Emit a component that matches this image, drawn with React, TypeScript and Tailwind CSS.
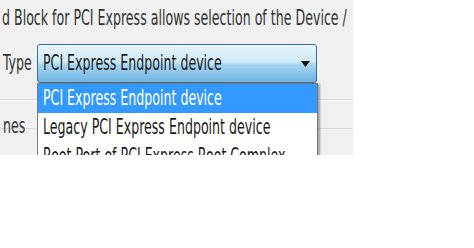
import React from 'react';

const FONT = "font-['DejaVu_Sans_Condensed','DejaVu_Sans',sans-serif]";

// texte étiré comme sur la capture (police haute, largeur serrée)
function T({ children, className = '' }: { children: React.ReactNode; className?: string }) {
  return (
    <span className={`inline-block origin-left scale-x-[0.667] whitespace-nowrap ${className}`}>{children}</span>
  );
}

export default function App() {
  return (
    <div className={`w-[474px] h-[248px] bg-white overflow-hidden ${FONT}`}>
      <div className="relative w-[353px] h-[155px] bg-[#f0f0f0] overflow-hidden text-[21px] leading-none">
        {/* description */}
        <div className="h-[44px] pl-[2px] pt-[8px] text-[#333]">
          <T>d Block for PCI Express allows selection of the Device /</T>
        </div>

        {/* ligne Type + combobox */}
        <div className="flex items-center h-[39px]">
          <div className="w-[37px] pl-[3px] text-[#333]">
            <T>Type</T>
          </div>
          <div className="flex items-center w-[280px] h-[39px] rounded-[3px] border border-[#3c6e92] bg-[linear-gradient(to_bottom,#e8f5fc_0%,#cfeaf8_45%,#a4d3f1_55%,#6fb5e2_100%)] pl-[5px] pr-[6px]">
            <div className="flex-1 min-w-0 text-[#1a1a1a]">
              <T>PCI Express Endpoint device</T>
            </div>
            <svg width="9" height="6" viewBox="0 0 9 6" className="shrink-0">
              <path d="M0 0 H9 L4.5 6 Z" fill="#111" />
            </svg>
          </div>
        </div>

        {/* lignes de fond (tableau derrière la liste) */}
        <div className="mt-[16px] border-t border-[#dadada] shadow-[0_1px_0_#fff]" />
        <div className="flex items-end h-[29px] pl-[3px] text-[#333] border-b border-[#dadada]">
          <div className="mb-[-9px]">
            <T>nes</T>
          </div>
        </div>

        {/* liste déroulante ouverte */}
        <div className="absolute left-[37px] top-[83px] w-[281px] bg-white border border-[#7a7a7a] shadow-[2px_1px_2px_rgba(0,0,0,0.35)]">
          <div className="h-[29px] flex items-center pl-[5px] bg-[#3399ff] text-white">
            <T>PCI Express Endpoint device</T>
          </div>
          <div className="h-[29px] flex items-center pl-[5px] text-[#1a1a1a]">
            <T>Legacy PCI Express Endpoint device</T>
          </div>
          <div className="h-[29px] flex items-center pl-[5px] text-[#1a1a1a]">
            <T>Root Port of PCI Express Root Complex</T>
          </div>
        </div>
      </div>
    </div>
  );
}
